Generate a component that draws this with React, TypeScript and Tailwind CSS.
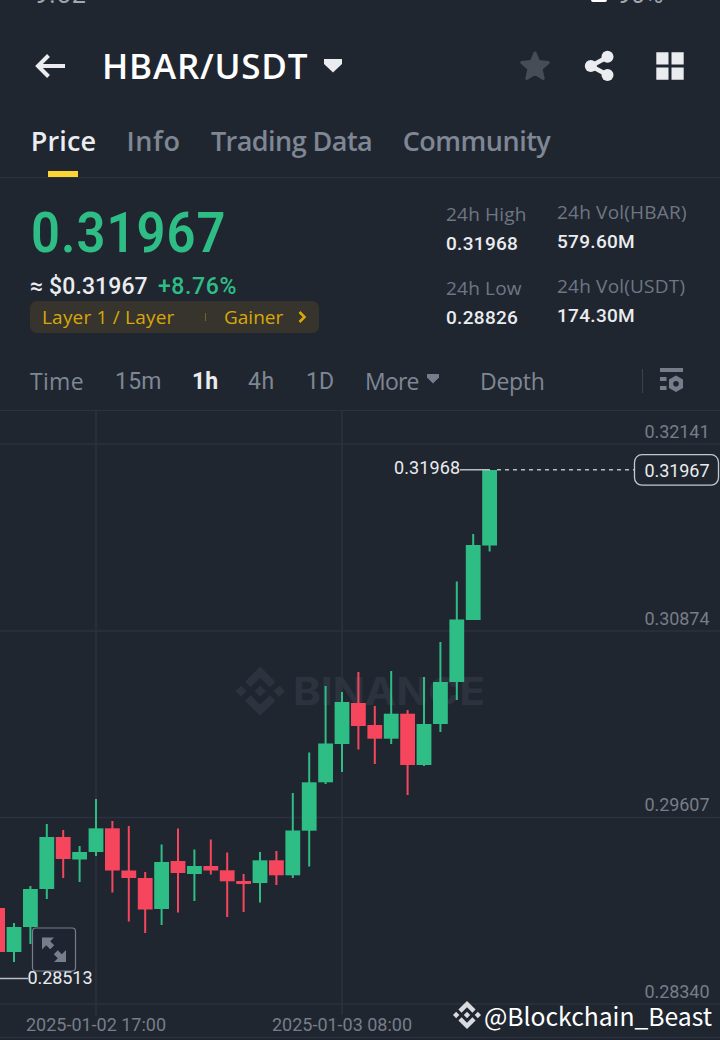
import { ReactNode } from 'react'
import { clsx } from 'clsx'

// [high, bodyTop, bodyBottom, low, isUp]
type Candle = [number, number, number, number, boolean]

const candles: Candle[] = [
  [908, 908, 952, 952, false],
  [923, 927, 952, 962, true],
  [886, 889, 927, 944, true],
  [824, 837, 889, 899, true],
  [830, 837, 859, 878, false],
  [846, 852, 859.5, 882, true],
  [799, 828.3, 852, 856, true],
  [821, 828.3, 870.5, 892.5, false],
  [826, 870.5, 878, 921.5, false],
  [872, 878, 909.5, 933, false],
  [844.5, 862, 909, 925, true],
  [828.5, 861, 873, 912.5, false],
  [849.5, 866, 874, 901, true],
  [839.5, 866, 870.5, 874.5, false],
  [852.5, 870.3, 881.3, 917, false],
  [874, 881, 884, 912, false],
  [852, 860.3, 883, 902.5, true],
  [851, 860.3, 875.3, 885, false],
  [793, 830.5, 875.3, 878, true],
  [752.5, 782.3, 830.7, 866.5, true],
  [686, 743.5, 782.3, 784, true],
  [692, 702, 744, 772, true],
  [672, 703, 726, 749.5, false],
  [706, 725, 738.7, 764, false],
  [671, 713.7, 738.7, 744, true],
  [710, 713.7, 765, 795, false],
  [677, 724, 765, 766, true],
  [642, 682, 724, 732, true],
  [581.5, 619.5, 682, 700, true],
  [534, 545, 620, 620, true],
  [470, 470, 545.5, 551.5, true],
]

const STEP = 16.4
const FIRST_X = -2.4

const priceLevels = [
  { value: '0.32141', y: 438, line: 444 },
  { value: '0.30874', y: 625, line: 631 },
  { value: '0.29607', y: 811, line: 817.5 },
  { value: '0.28340', y: 998, line: 1004 },
]

const tabs = [
  { name: 'Price', width: 'w-[65px]', tracking: 'tracking-[0.2px]' },
  { name: 'Info', width: 'w-[53px]', tracking: 'tracking-[0.6px]' },
  { name: 'Trading Data', width: 'w-[161px]', tracking: 'tracking-[-0.55px]' },
  { name: 'Community', width: 'w-[147px]', tracking: 'tracking-[-0.5px]' },
]

function BinanceMark({ className }: { className?: string }) {
  return (
    <svg viewBox="0 0 126.6 126.6" className={className} fill="currentColor">
      <BinancePaths />
    </svg>
  )
}

function BinancePaths() {
  return (
    <>
      <path d="M38.7 53.2 63.3 28.6 87.9 53.2 102.2 38.9 63.3 0 24.4 38.9Z" />
      <path d="M0 63.3 14.3 49 28.6 63.3 14.3 77.6Z" />
      <path d="M38.7 73.4 63.3 98 87.9 73.4 102.2 87.7 63.3 126.6 24.4 87.7Z" />
      <path d="M98 63.3 112.3 49 126.6 63.3 112.3 77.6Z" />
      <path d="M77.8 63.3 63.3 48.8 48.8 63.3 63.3 77.8Z" />
    </>
  )
}

function Header() {
  return (
    <header className="flex h-[92px] items-center pt-[31px] pr-9 pl-[35px]">
      <svg width="31" height="26" viewBox="0 0 31 26" fill="none" stroke="#eaecef" strokeWidth="4" className="shrink-0">
        <path d="M30 13H4M13.5 2.5 3 13l10.5 10.5" />
      </svg>
      <h1 className="ml-[36px] w-[209px] whitespace-nowrap font-['Open_Sans'] text-[35px] leading-none font-semibold tracking-[0.8px] text-white">
        HBAR/USDT
      </h1>
      <svg width="20" height="16" viewBox="0 0 20 16" fill="#eaecef" className="ml-3">
        <path d="M1 1h18v5l-9 8.5L1 6Z" />
      </svg>
      <div className="ml-auto flex items-center">
        <svg width="30" height="30" viewBox="0 0 30 30" fill="#474d57" stroke="#474d57" strokeWidth="3" strokeLinejoin="round">
          <path d="m15 2 3.7 8.6 9.5.9-7.2 6.3 2.2 9.6L15 22.5l-8.2 4.9L9 17.8 1.8 11.5l9.5-.9Z" />
        </svg>
        <svg width="30" height="32" viewBox="0 0 30 32" fill="#eaecef" className="ml-[34px]">
          <path d="M23.5 7 7 16l16.5 9" fill="none" stroke="#eaecef" strokeWidth="4.5" />
          <circle cx="23.5" cy="6.8" r="6" />
          <circle cx="6.8" cy="16" r="6" />
          <circle cx="23.5" cy="25" r="6" />
        </svg>
        <svg width="28" height="28" viewBox="0 0 28 28" fill="#eaecef" className="ml-[42px]">
          <path d="M.3.3h12.2v12.2H.3ZM15.5.3h12.2v12.2H15.5ZM.3 15.5h12.2v12.2H.3ZM15.5 15.5h12.2v12.2H15.5Z" />
        </svg>
      </div>
    </header>
  )
}

function Stat({ label, children }: { label: string; children: ReactNode }) {
  return (
    <div className="h-[74px] whitespace-nowrap">
      <p className="font-['Open_Sans'] text-[19px] leading-[28px] tracking-[0.2px] text-[#6f7683]">{label}</p>
      <p className="pt-0.5 font-[Roboto] text-[19px] leading-[28px] font-medium tracking-[0.3px] text-[#eaecef]">{children}</p>
    </div>
  )
}

function Ticker() {
  return (
    <section className="flex h-[174px] pl-[30px]">
      <div className="w-[416px] pt-[26px]">
        <p className="h-[68px] w-fit origin-left scale-x-[0.905] pl-px font-[Roboto] text-[56px] leading-[58px] font-semibold tracking-[1.2px] text-[#2ebd85]">
          0.31967
        </p>
        <p className="flex h-[29px] items-center gap-[10px] font-[Roboto] text-[23px] leading-[29px] font-medium whitespace-nowrap">
          <span className="w-[118px] tracking-[0.1px] text-[#eaecef]">≈ $0.31967</span>
          <span className="tracking-[0.6px] text-[#2ebd85]">+8.76%</span>
        </p>
        <div className="flex h-8 w-[289px] items-center rounded-[7px] bg-[#36342d] pl-3 font-['Open_Sans'] text-[19px] text-[#d9a70b]">
          <span className="w-[163px] tracking-[0.2px]">Layer 1 / Layer</span>
          <span className="h-2 w-px bg-[#7a6322]" />
          <span className="ml-[18px] w-[59px]">Gainer</span>
          <svg width="9" height="12" viewBox="0 0 9 12" fill="none" stroke="currentColor" strokeWidth="2.6" className="ml-[15px]">
            <path d="m1.5 1 5 5-5 5" />
          </svg>
        </div>
      </div>
      <div className="w-[111px] pt-[22px]">
        <Stat label="24h High">0.31968</Stat>
        <Stat label="24h Low">0.28826</Stat>
      </div>
      <div className="pt-5">
        <Stat label="24h Vol(HBAR)">579.60M</Stat>
        <Stat label="24h Vol(USDT)">174.30M</Stat>
      </div>
    </section>
  )
}

function Intervals() {
  return (
    <div className="flex h-[59px] items-center border-b border-[#2b323d] pr-9 pl-[30px] font-['Open_Sans'] text-[23px] whitespace-nowrap text-[#7f8794]">
      <span className="w-[85px] tracking-[0.3px]">Time</span>
      <span className="w-[77px] pt-0.5 font-[Roboto] tracking-[0.2px]">15m</span>
      <span className="w-14 pt-0.5 font-[Roboto] font-bold text-[#eaecef]">1h</span>
      <span className="w-[58px] pt-0.5 font-[Roboto] tracking-[0.6px]">4h</span>
      <span className="w-[59px] pt-0.5 font-[Roboto]">1D</span>
      <span className="w-[61px] tracking-[-0.8px]">More</span>
      <svg width="14" height="12" viewBox="0 0 14 12" fill="#777e8b" className="mb-1">
        <path d="M1 1h12v3.5L7 10.5 1 4.5Z" />
      </svg>
      <span className="ml-10 tracking-[-0.3px]">Depth</span>
      <span className="ml-auto h-6 w-px bg-[#3b424d]" />
      <svg width="25" height="26" viewBox="0 0 25 26" fill="#777e8b" className="mb-1 ml-4">
        <path d="M1 2h23v4H1ZM1 11h6.5v4H1ZM1 20h6.5v4H1Z" />
        <path fillRule="evenodd" d="m17 9.5 7 4v8.5l-7 4-7-4v-8.5ZM17 15a2.8 2.8 0 1 0 0 5.6 2.8 2.8 0 0 0 0-5.6Z" />
      </svg>
    </div>
  )
}

function Chart() {
  return (
    <svg width="720" height="629" viewBox="0 411 720 629" className="block font-[Roboto]">
      {/* grid */}
      <g stroke="#2b323d" strokeWidth="1.6">
        {priceLevels.map((level) => (
          <path key={level.value} d={`M0 ${level.line}H720`} />
        ))}
        <path d="M96 411V1015M342 411V1015M0 1037.5H720" />
      </g>

      {/* watermark */}
      <g fill="#2d333e">
        <g transform="translate(235.5 666.5) scale(.39)">
          <BinancePaths />
        </g>
        <text x="293" y="704.5" fontSize="38" fontWeight="700" textLength="192" lengthAdjust="spacingAndGlyphs" className="font-[Inter]">
          BINANCE
        </text>
      </g>

      {/* candles */}
      {candles.map(([high, top, bottom, low, up], i) => {
        const x = FIRST_X + i * STEP
        return (
          <g key={i} fill={up ? '#2ebd85' : '#f6465d'}>
            <rect x={x - 1} y={high} width="2" height={low - high} />
            <rect x={x - 7.4} y={top} width="14.8" height={bottom - top} />
          </g>
        )
      })}

      {/* high / low / last price markers */}
      <g stroke="#b9bdc3" strokeWidth="1.4">
        <path d="M460 469.7H490M0 978.5H28" />
        <path d="M497 469.7H634" strokeDasharray="4 4" />
      </g>
      <g fill="#eaecef" fontSize="18">
        <text x="394" y="474" textLength="66">0.31968</text>
        <text x="27.5" y="984" textLength="65">0.28513</text>
      </g>
      <rect x="634.5" y="454.7" width="84" height="30.5" rx="7.5" fill="#202630" stroke="#c3c7cd" strokeWidth="1.3" />
      <text x="644.5" y="477" fontSize="18" textLength="65" fill="#eaecef">0.31967</text>

      {/* axis labels */}
      <g fill="#777d89" fontSize="18">
        {priceLevels.map((level) => (
          <text key={level.value} x="644.5" y={level.y} textLength="65">{level.value}</text>
        ))}
        <text x="26" y="1031" textLength="140">2025-01-02 17:00</text>
        <text x="272" y="1031" textLength="140">2025-01-03 08:00</text>
      </g>

      {/* expand button */}
      <rect x="32.5" y="928" width="43" height="43" rx="3.5" fill="#202630" fillOpacity=".85" stroke="#777e8b" strokeWidth="1.2" />
      <path fill="#777e8b" d="M42 937.5h12l-3.800 3.800 4 4-4 4-4-4-4.200 4.200ZM66 962H54l3.800-3.800-4-4 4-4 4 4 4.200-4.200Z" />
    </svg>
  )
}

export default function App() {
  return (
    <div className="relative h-[1040px] w-[720px] overflow-hidden bg-[#202630]">
      {/* status bar, scrolled out of view */}
      <div className="flex h-1 items-end overflow-hidden pl-[34px] font-[Roboto] text-[25px] leading-[14px] text-[#a2a6ad]">
        <span className="mb-0.5 w-[557px] tracking-[1.2px]">9:52</span>
        <span className="mb-0.5 h-[3px] w-4 rounded-b-xs bg-white" />
        <span className="mb-0.5 ml-2.5">90%</span>
      </div>
      <Header />
      <nav className="flex h-[82px] items-start gap-[31px] border-b border-[#2b323d] pl-[31px] font-['Open_Sans'] text-[27px] font-semibold whitespace-nowrap text-[#7f8794]">
        {tabs.map((tab, i) => (
          <div
            key={tab.name}
            className={clsx('flex h-full flex-col items-center justify-between pt-[26px]', tab.width, i === 0 && 'text-[#eaecef]')}
          >
            <span className={clsx('leading-[38px]', tab.tracking)}>{tab.name}</span>
            {i === 0 && <span className="mr-px h-1.5 w-[30px] bg-[#fcd535]" />}
          </div>
        ))}
      </nav>
      <Ticker />
      <Intervals />
      <Chart />
      <div className="absolute right-2 bottom-[11px] flex items-center text-[#d9dbde]">
        <BinanceMark className="mr-[3px] size-7" />
        <span className="font-['Noto_Sans_CJK_SC',sans-serif] text-[24.7px] leading-[26px] text-white">@Blockchain_Beast</span>
      </div>
    </div>
  )
}
